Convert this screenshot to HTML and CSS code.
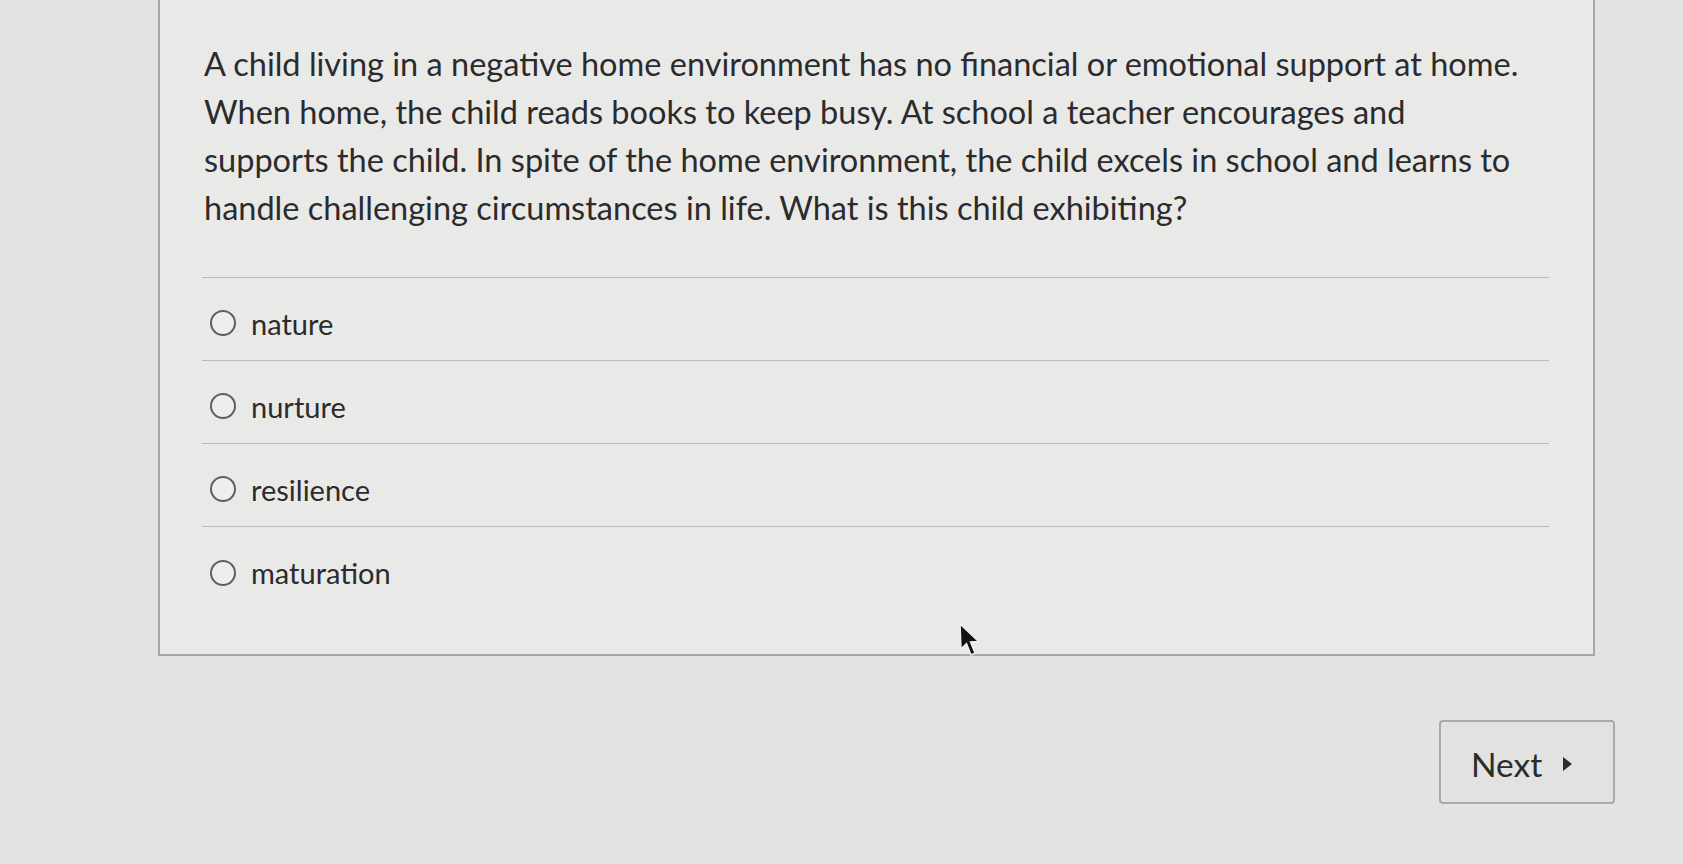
FILE: index.html
```html
<!DOCTYPE html>
<html>
<head>
<meta charset="utf-8">
<link rel="stylesheet" href="styles.css">
</head>
<body>
<div class="page">
  <div class="card">
    <p class="question">A child living in a negative home environment has no financial or emotional support at home.<br>When home, the child reads books to keep busy. At school a teacher encourages and<br>supports the child. In spite of the home environment, the child excels in school and learns to<br>handle challenging circumstances in life. What is this child exhibiting?</p>
    <ul class="options">
      <li class="option"><span class="radio"></span><span class="label">nature</span></li>
      <li class="option"><span class="radio"></span><span class="label">nurture</span></li>
      <li class="option"><span class="radio"></span><span class="label">resilience</span></li>
      <li class="option"><span class="radio"></span><span class="label">maturation</span></li>
    </ul>
  </div>
  <div class="actions">
    <button class="next">Next <span class="tri"></span></button>
  </div>
  <svg class="cursor" width="24" height="36" viewBox="0 0 24 36"><path d="M2 2 L3 27 L8.5 21.5 L13 33 L17 31 L12.5 20 L20.5 19.5 Z" fill="#111" stroke="#eee" stroke-width="1.5"/></svg>
</div>
</body>
</html>
```
FILE: styles.css
```css
html, body {
  margin: 0;
  padding: 0;
}
body {
  background: #e3e4e2;
  font-family: Lato, "Open Sans", sans-serif;
  color: #2b2b2d;
  width: 1683px;
  height: 864px;
  overflow: hidden;
}
.page {
  position: relative;
  padding-left: 158px;
}
.card {
  width: 1437px;
  box-sizing: border-box;
  background: #e9e9e8;
  border: 2px solid #a6a7a8;
  border-top: none;
  padding: 40px 44px 44px 42px;
}
.question {
  margin: 0;
  font-size: 32.5px;
  line-height: 48px;
  padding-left: 2px;
}
.options {
  list-style: none;
  margin: 45px 0 0;
  padding: 0;
  border-top: 1px solid #b9babb;
}
.option {
  display: flex;
  align-items: center;
  height: 83px;
  box-sizing: border-box;
  border-bottom: 1px solid #b9babb;
  font-size: 29px;
  padding-left: 8px;
  padding-top: 8px;
}
.option:last-child {
  border-bottom: none;
}
.radio {
  width: 22px;
  height: 22px;
  border: 2px solid #5e5f61;
  border-radius: 50%;
  background: #eeeeed;
  margin-right: 15px;
  flex: none;
}
.actions {
  display: flex;
  justify-content: flex-end;
  width: 1457px;
  margin-top: 64px;
}
.next {
  width: 176px;
  height: 84px;
  background: #e2e2e1;
  border: 2px solid #a9aaab;
  border-radius: 4px;
  font-family: Lato, "Open Sans", sans-serif;
  font-size: 33.5px;
  color: #2b2b2d;
  display: flex;
  align-items: center;
  justify-content: flex-start;
  gap: 21px;
  padding: 4px 0 0 30px;
}
.tri {
  width: 0;
  height: 0;
  border-top: 7px solid transparent;
  border-bottom: 7px solid transparent;
  border-left: 9px solid #2b2b2d;
}
.cursor {
  position: absolute;
  left: 958px;
  top: 622px;
}
```
